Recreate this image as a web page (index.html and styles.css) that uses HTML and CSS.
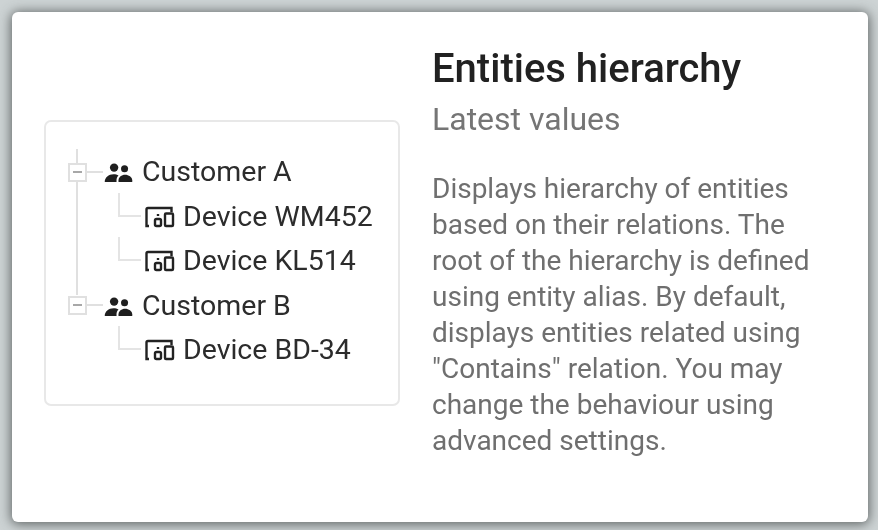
FILE: index.html
```html
<!DOCTYPE html>
<html lang="en">
<head>
<meta charset="utf-8">
<title>Entities hierarchy</title>
<link rel="stylesheet" href="styles.css">
</head>
<body>
<main class="card">
  <section class="preview">
    <div class="tree">
      <div class="vline"></div>
      <div class="row root">
        <span class="toggle"></span>
        <svg class="icon-people" viewBox="0 0 26 20"><circle cx="9" cy="6" r="3.800"/><circle cx="18.500" cy="7" r="3.200"/><path d="M.5 19c0-4 3.500-7 8-7 1.800 0 3.300.4 4.500 1.200-1.300 1.200-1.800 2.700-1.800 4.300V19z"/><path d="M13 19v-1.500c0-2.800 2.800-5 6-5s6.500 2.200 6.500 5V19z"/></svg>
        <span class="label">Customer A</span>
      </div>
      <div class="row child">
        <span class="elbow"></span>
        <svg class="icon-device" viewBox="0 0 30 22"><path d="M4 20H1.500V3.500c0-1 .6-1.500 1.500-1.500h23.500v4"/><rect x="10" y="13" width="6" height="7" rx="1.500"/><path d="M13 8v2"/><rect x="20" y="7.500" width="8" height="12.500" rx="1"/></svg>
        <span class="label">Device WM452</span>
      </div>
      <div class="row child">
        <span class="elbow"></span>
        <svg class="icon-device" viewBox="0 0 30 22"><path d="M4 20H1.500V3.500c0-1 .6-1.500 1.500-1.500h23.500v4"/><rect x="10" y="13" width="6" height="7" rx="1.500"/><path d="M13 8v2"/><rect x="20" y="7.500" width="8" height="12.500" rx="1"/></svg>
        <span class="label">Device KL514</span>
      </div>
      <div class="row root">
        <span class="toggle"></span>
        <svg class="icon-people" viewBox="0 0 26 20"><circle cx="9" cy="6" r="3.800"/><circle cx="18.500" cy="7" r="3.200"/><path d="M.5 19c0-4 3.500-7 8-7 1.800 0 3.300.4 4.500 1.200-1.300 1.200-1.800 2.700-1.800 4.300V19z"/><path d="M13 19v-1.500c0-2.800 2.800-5 6-5s6.500 2.200 6.500 5V19z"/></svg>
        <span class="label">Customer B</span>
      </div>
      <div class="row child">
        <span class="elbow"></span>
        <svg class="icon-device" viewBox="0 0 30 22"><path d="M4 20H1.500V3.500c0-1 .6-1.500 1.500-1.500h23.500v4"/><rect x="10" y="13" width="6" height="7" rx="1.500"/><path d="M13 8v2"/><rect x="20" y="7.500" width="8" height="12.500" rx="1"/></svg>
        <span class="label">Device BD-34</span>
      </div>
    </div>
  </section>
  <section class="info">
    <h1 class="title">Entities hierarchy</h1>
    <h2 class="subtitle">Latest values</h2>
    <p class="desc">Displays hierarchy of entities<br>based on their relations. The<br>root of the hierarchy is defined<br>using entity alias. By default,<br>displays entities related using<br>"Contains" relation. You may<br>change the behaviour using<br>advanced settings.</p>
  </section>
</main>
</body>
</html>
```
FILE: styles.css
```css
* { box-sizing: border-box; }
html, body { margin: 0; height: 100%; }
body {
  width: 878px;
  height: 530px;
  padding: 12px 10px 8px 12px;
  background: #cdd3d4;
  font-family: Roboto, "Liberation Sans", sans-serif;
  overflow: hidden;
}
.card {
  height: 510px;
  background: #fff;
  border-radius: 6px;
  display: flex;
  padding: 0 32px;
  box-shadow: 0 1px 12px 1px rgba(62, 68, 68, .8);
}
.preview {
  width: 356px;
  flex: none;
  margin-top: 108px;
  margin-right: 32px;
}
.tree {
  position: relative;
  width: 356px;
  height: 286px;
  border: 2px solid #e8e8e8;
  border-radius: 7px;
  padding: 28px 0 0 22px;
  filter: blur(.45px);
}
.vline {
  position: absolute;
  left: 30px;
  top: 27px;
  width: 2px;
  height: 146px;
  background: #e0e0e0;
}
.row {
  position: relative;
  display: flex;
  align-items: center;
  height: 44.500px;
}
.toggle {
  position: relative;
  width: 19px;
  height: 19px;
  margin-right: 17px;
  border: 2px solid #e0e0e0;
  background: #fff;
  flex: none;
}
.toggle::before {
  content: "";
  position: absolute;
  left: 3px;
  top: 6px;
  width: 9px;
  height: 2px;
  background: #a8a8a8;
}
.toggle::after {
  content: "";
  position: absolute;
  left: 17px;
  top: 6px;
  width: 16px;
  height: 2px;
  background: #e0e0e0;
}
.icon-people {
  width: 29px;
  height: 22px;
  margin-right: 9px;
  fill: #1f1f1f;
  flex: none;
}
.icon-device {
  width: 30px;
  height: 22px;
  margin-right: 8px;
  fill: none;
  stroke: #222;
  stroke-width: 2.400;
  flex: none;
}
.child { padding-left: 49px; }
.elbow {
  width: 20px;
  height: 0;
  position: absolute;
  left: 50px;
  top: 22px;
}
.elbow::before {
  content: "";
  position: absolute;
  left: 0;
  bottom: 0;
  width: 21px;
  height: 22px;
  border-left: 2px solid #e4e4e4;
  border-bottom: 2px solid #e4e4e4;
}
.child .icon-device { margin-left: 28px; }
.label {
  font-size: 28.500px;
  line-height: 34px;
  color: #2c2c2c;
  white-space: nowrap;
}
.info {
  padding-top: 32px;
  min-width: 0;
  filter: blur(.3px);
}
.title {
  margin: 0;
  font-size: 40px;
  line-height: 50px;
  font-weight: 500;
  color: #212121;
  white-space: nowrap;
}
.subtitle {
  margin: 5px 0 0;
  font-size: 32px;
  line-height: 40px;
  font-weight: 400;
  color: #757575;
  white-space: nowrap;
}
.desc {
  margin: 32px 0 0;
  font-size: 28px;
  line-height: 36px;
  color: #6f6f6f;
  white-space: nowrap;
}
```
